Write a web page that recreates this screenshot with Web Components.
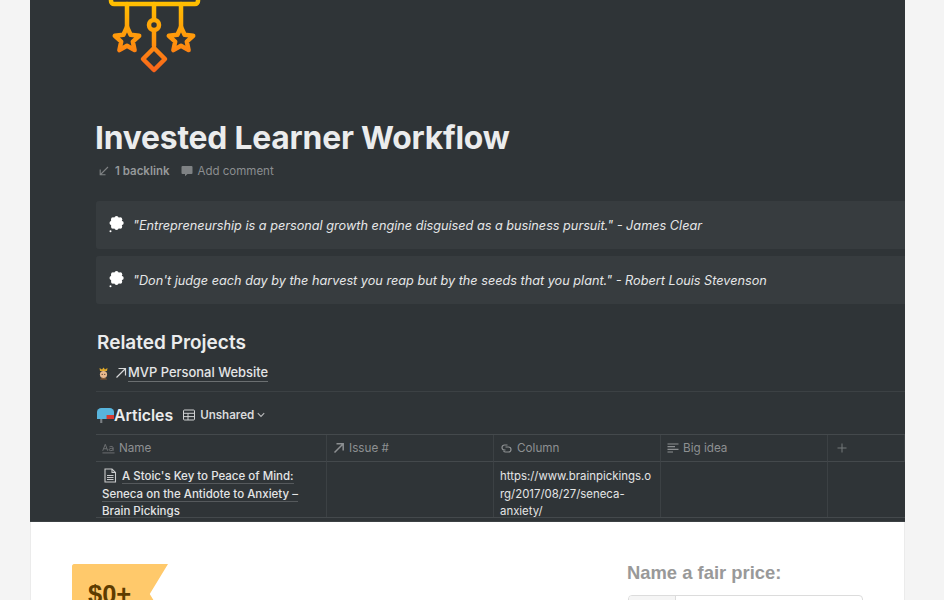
<!DOCTYPE html>
<html>
<head>
<meta charset="utf-8">
<title>Invested Learner Workflow</title>
<style>
  html, body { margin: 0; height: 600px; overflow: hidden; background: #f4f4f4; }
  body { font-family: Inter, "Liberation Sans", sans-serif; }
</style>
</head>
<body>
<product-page>
  <notion-cover>
    <page-meta></page-meta>
    <quote-callout>"Entrepreneurship is a personal growth engine disguised as a business pursuit." - James Clear</quote-callout>
    <quote-callout>"Don't judge each day by the harvest you reap but by the seeds that you plant." - Robert Louis Stevenson</quote-callout>
    <related-projects></related-projects>
    <articles-table></articles-table>
  </notion-cover>
  <price-panel></price-panel>
</product-page>

<script>
  customElements.define(
    "product-page",
    class extends HTMLElement {
      constructor() {
        super();
        const shadowRoot = this.attachShadow({ mode: "open" });
        shadowRoot.innerHTML = `
        <style>
          :host { display: block; width: 875px; margin-left: 30px; height: 600px; overflow: hidden; }
        </style>
        <slot></slot>
      `;
      }
    }
  );

  customElements.define(
    "notion-cover",
    class extends HTMLElement {
      constructor() {
        super();
        const shadowRoot = this.attachShadow({ mode: "open" });
        shadowRoot.innerHTML = `
        <style>
          :host {
            display: block;
            height: 522px;
            overflow: hidden;
            box-sizing: border-box;
            padding-left: 66px;
            background: #2f3437;
            border-bottom: 1px solid #3c4144;
            color: #ebeced;
          }
          svg { display: block; margin-left: 4px; }
          h1 {
            margin: 44px 0 0 -1px;
            font-size: 31.800px;
            line-height: 38px;
            font-weight: 700;
            letter-spacing: -0.2px;
            color: #ebeced;
          }
        </style>
        <svg width="110" height="75" viewBox="100 0 110 75" fill="none" stroke="url(#mobile)" stroke-width="4.500" stroke-linejoin="round" stroke-linecap="round">
          <defs>
            <linearGradient id="mobile" gradientUnits="userSpaceOnUse" x1="0" y1="0" x2="0" y2="72">
              <stop offset="0" stop-color="#ffc200"/>
              <stop offset="0.55" stop-color="#ff960c"/>
              <stop offset="1" stop-color="#f8621c"/>
            </linearGradient>
          </defs>
          <path d="M111 -6V1a3 3 0 0 0 3 3H195a3 3 0 0 0 3-3V-6"/>
          <path d="M127 4V27M154 4V18M181 4V27M154 32V46"/>
          <circle cx="154" cy="25" r="5"/>
          <path d="M127 27l3.600 7.800 8.600 1-6.400 5.800 1.800 8.500-7.600-4.300-7.600 4.300 1.800-8.500-6.400-5.800 8.600-1z"/>
          <path d="M181 27l3.600 7.800 8.600 1-6.400 5.800 1.800 8.500-7.600-4.300-7.600 4.300 1.800-8.500-6.400-5.800 8.600-1z"/>
          <path d="M154 48l11 11-11 11-11-11z"/>
        </svg>
        <h1>Invested Learner Workflow</h1>
        <slot></slot>
      `;
      }
    }
  );

  customElements.define(
    "page-meta",
    class extends HTMLElement {
      constructor() {
        super();
        const shadowRoot = this.attachShadow({ mode: "open" });
        shadowRoot.innerHTML = `
        <style>
          :host {
            display: flex;
            align-items: center;
            height: 20px;
            margin: 4px 0 20px 3px;
            font-size: 11.500px;
            color: #8b8e90;
          }
          svg { display: block; flex: none; }
          .backlink { margin-left: 6px; font-weight: 600; color: #96999b; }
          .comment { margin: 0 0 0 11px; }
          .add { margin-left: 5px; }
        </style>
        <svg width="10" height="10" viewBox="0 0 10 10" fill="none" stroke="#7f8284" stroke-width="1.100">
          <path d="M9 1L1.500 8.500M1.200 3.500V8.800H6.500"/>
        </svg>
        <span class="backlink">1 backlink</span>
        <svg class="comment" width="12" height="12" viewBox="0 0 12 12" fill="#7f8284">
          <path d="M1.500 1H10.500a1 1 0 0 1 1 1V8a1 1 0 0 1-1 1H6.500L4 11.200V9H1.500a1 1 0 0 1-1-1V2a1 1 0 0 1 1-1z"/>
        </svg>
        <span class="add">Add comment</span>
      `;
      }
    }
  );

  customElements.define(
    "quote-callout",
    class extends HTMLElement {
      constructor() {
        super();
        const shadowRoot = this.attachShadow({ mode: "open" });
        shadowRoot.innerHTML = `
        <style>
          :host {
            display: flex;
            align-items: center;
            box-sizing: border-box;
            height: 48px;
            margin-bottom: 7px;
            padding: 1px 0 0 12px;
            border-radius: 3px 0 0 3px;
            background: #373c3f;
            font-size: 12.700px;
            font-style: italic;
            color: #e6e7e8;
            white-space: nowrap;
          }
          svg { display: block; flex: none; margin: -3px 7px 0 0; }
        </style>
        <svg width="18" height="18" viewBox="0 0 18 18" fill="#fff">
          <circle cx="8.500" cy="8" r="6"/>
          <circle cx="3.500" cy="8" r="2"/>
          <circle cx="13.700" cy="8" r="2"/>
          <circle cx="5" cy="4.300" r="2"/>
          <circle cx="8.500" cy="2.900" r="2"/>
          <circle cx="12.200" cy="4.300" r="2"/>
          <circle cx="5" cy="11.700" r="2"/>
          <circle cx="8.500" cy="13" r="2"/>
          <circle cx="12.200" cy="11.700" r="2"/>
          <circle cx="2.500" cy="16.200" r="1"/>
        </svg>
        <span><slot></slot></span>
      `;
      }
    }
  );

  customElements.define(
    "related-projects",
    class extends HTMLElement {
      constructor() {
        super();
        const shadowRoot = this.attachShadow({ mode: "open" });
        shadowRoot.innerHTML = `
        <style>
          :host { display: block; border-bottom: 1px solid #3c4144; height: 80px; }
          h2 {
            margin: 0;
            padding: 17px 0 0 1px;
            font-size: 19px;
            line-height: 30px;
            font-weight: 600;
            color: #ebeced;
          }
          .link { display: flex; align-items: center; height: 24px; margin-top: 3px; padding-left: 2px; font-size: 12.950px; }
          svg { display: block; flex: none; }
          .arrow { margin: 0 1px 0 6px; }
          a { color: #e4e5e6; font-weight: 500; text-decoration: none; border-bottom: 1px solid #6b6f71; line-height: 17px; }
        </style>
        <h2>Related Projects</h2>
        <div class="link">
          <svg width="11" height="13" viewBox="0 0 11 13">
            <path d="M2 4L1.500 1 4 2.500 5.500 .5 7 2.500 9.500 1 9 4z" fill="#e0a92a"/>
            <circle cx="5.500" cy="7.500" r="3.600" fill="#e9b98f"/>
            <path d="M2 12.500c.4-2 7-2 7 0z" fill="#8a5a33"/>
            <circle cx="4.200" cy="7.300" r=".6" fill="#40291b"/>
            <circle cx="6.800" cy="7.300" r=".6" fill="#40291b"/>
          </svg>
          <svg class="arrow" width="12" height="12" viewBox="0 0 12 12" fill="none" stroke="#d6d7d8" stroke-width="1.200">
            <path d="M1.500 10.500L10.500 1.500M3.500 1.500H10.500V8.500"/>
          </svg>
          <a>MVP Personal Website</a>
        </div>
      `;
      }
    }
  );

  customElements.define(
    "articles-table",
    class extends HTMLElement {
      constructor() {
        super();
        const shadowRoot = this.attachShadow({ mode: "open" });
        shadowRoot.innerHTML = `
        <style>
          :host { display: block; }
          .title { display: flex; align-items: center; box-sizing: border-box; height: 42px; padding: 4px 0 0 1px; }
          .title svg { display: block; flex: none; }
          .title b { font-size: 15.800px; font-weight: 600; color: #ebeced; }
          .view { display: flex; align-items: center; margin-left: 10px; font-size: 11.600px; font-weight: 600; color: #d9dadb; }
          .view span { margin: 0 3px 0 5px; }
          .grid {
            display: grid;
            grid-template-columns: 231px 167px 167px 167px 1fr;
            border-top: 1px solid #44494c;
            border-bottom: 1px solid #44494c;
          }
          .head {
            display: flex;
            align-items: center;
            gap: 4px;
            height: 26px;
            padding-left: 6px;
            border-bottom: 1px solid #44494c;
            border-right: 1px solid #3c4144;
            font-size: 11.700px;
            color: #8d9092;
          }
          .head svg { display: block; flex: none; }
          .head:last-of-type { border-right: none; }
          .cell {
            height: 55px;
            overflow: hidden;
            box-sizing: border-box;
            padding: 6px 6px 0;
            border-right: 1px solid #3c4144;
            font-size: 11.500px;
            line-height: 17.500px;
            font-weight: 500;
            color: #e4e5e6;
          }
          .cell:last-child { border-right: none; }
          .cell svg { vertical-align: -3px; margin: 0 2px 0 1px; }
          .name a { border-bottom: 1px solid #55595c; }
          .url { font-size: 11.400px; font-weight: 400; white-space: nowrap; }
        </style>
        <div class="title">
          <svg width="17" height="16" viewBox="0 0 16 16" preserveAspectRatio="none">
            <rect x="3" y="10" width="2" height="6" fill="#7a7f83"/>
            <path d="M0 5a4 4 0 0 1 4-4h8a4 4 0 0 1 4 4v7H0z" fill="#58b4dc"/>
            <path d="M9 8h7v4H9z" fill="#d8392f"/>
          </svg>
          <b>Articles</b>
          <div class="view">
            <svg width="12" height="12" viewBox="0 0 12 12" fill="none" stroke="#d0d1d2" stroke-width="1">
              <rect x=".5" y="1" width="11" height="10" rx="1"/>
              <path d="M.5 4.300H11.500M.5 7.600H11.500M5 4.300V11"/>
            </svg>
            <span>Unshared</span>
            <svg width="8" height="6" viewBox="0 0 8 6" fill="none" stroke="#b9babb" stroke-width="1.100">
              <path d="M.8 1.200L4 4.500 7.200 1.200"/>
            </svg>
          </div>
        </div>
        <div class="grid">
          <div class="head">
            <svg width="13" height="12" viewBox="0 0 14 12" fill="none" stroke="#707375" stroke-width="1">
              <path d="M.8 9L3.500 2 6.200 9M1.700 6.800H5.300"/>
              <path d="M8 4.800c2-1 4-.5 4 1V9M12 6.500c-3-.4-4.300.2-4.300 1.300 0 1.400 3 1.400 4.300 0"/>
              <path d="M.5 11.300H13.500"/>
            </svg>Name
          </div>
          <div class="head">
            <svg width="12" height="12" viewBox="0 0 12 12" fill="none" stroke="#8d9092" stroke-width="1.500">
              <path d="M1.500 10.500L10 2M3.500 1.800H10.200V8.500"/>
            </svg>Issue #
          </div>
          <div class="head">
            <svg width="13" height="12" viewBox="0 0 13 12" fill="none" stroke="#8d9092" stroke-width="1.200">
              <path d="M7.500 3H4.500a2.500 2.500 0 0 0 0 5h1"/>
              <path d="M5.500 5h3a2.500 2.500 0 0 1 0 5h-3c-.8 0-1.500-.3-2-.8"/>
            </svg>Column
          </div>
          <div class="head">
            <svg width="12" height="12" viewBox="0 0 12 12" fill="none" stroke="#8d9092" stroke-width="1.200">
              <path d="M.5 2H11.500M.5 4.700H8M.5 7.400H11.500M.5 10H6"/>
            </svg>Big idea
          </div>
          <div class="head">
            <svg style="margin-left:3px" width="10" height="10" viewBox="0 0 10 10" fill="none" stroke="#75787a" stroke-width="1">
              <path d="M5 .5V9.500M.5 5H9.500"/>
            </svg>
          </div>
          <div class="cell name">
            <svg width="14" height="15" viewBox="0 0 14 15" fill="none" stroke="#c9cacb" stroke-width="1.100">
              <path d="M2 1H9L12.500 4.500V14H2z"/>
              <path d="M9 1V4.500H12.500M4 7.500H10.500M4 9.500H10.500M4 11.500H10.500"/>
            </svg>
            <a>A Stoic's Key to Peace of Mind:</a><br><a>Seneca on the Antidote to Anxiety –</a><br><a>Brain Pickings</a>
          </div>
          <div class="cell"></div>
          <div class="cell url">https://www.brainpickings.o<br>rg/2017/08/27/seneca-<br>anxiety/</div>
          <div class="cell"></div>
          <div class="cell"></div>
        </div>
      `;
      }
    }
  );

  customElements.define(
    "price-panel",
    class extends HTMLElement {
      constructor() {
        super();
        const shadowRoot = this.attachShadow({ mode: "open" });
        shadowRoot.innerHTML = `
        <style>
          :host {
            display: flex;
            justify-content: space-between;
            box-sizing: border-box;
            height: 78px;
            padding: 42px 42px 0;
            background: #fff;
            box-shadow: inset 1px 0 0 #ebebeb, inset -1px 0 0 #ebebeb;
            font-family: "Liberation Sans", Arial, sans-serif;
          }
          .tag {
            box-sizing: border-box;
            width: 96px;
            height: 60px;
            padding: 13px 0 0 16px;
            background: #ffc96b;
            clip-path: polygon(0 1px, 1px 0, 100% 0, 81% 50%, 100% 100%, 0 100%);
            border-radius: 2px 0 0 0;
            font-size: 25.500px;
            line-height: 34px;
            font-weight: 700;
            color: #5e3c00;
          }
          .fair { width: 235px; margin-top: -1px; }
          h3 { margin: 0 0 0 -1px; font-size: 18.400px; line-height: 20px; font-weight: 700; color: #999; }
          .field {
            display: flex;
            height: 40px;
            margin-top: 12px;
            border: 1px solid #dcdcdc;
            border-radius: 4px;
            overflow: hidden;
            box-sizing: border-box;
          }
          .unit { width: 46px; background: #f5f5f5; border-right: 1px solid #dcdcdc; }
        </style>
        <div class="tag">$0+</div>
        <div class="fair">
          <h3>Name a fair price:</h3>
          <div class="field"><div class="unit"></div></div>
        </div>
      `;
      }
    }
  );
</script>
</body>
</html>
